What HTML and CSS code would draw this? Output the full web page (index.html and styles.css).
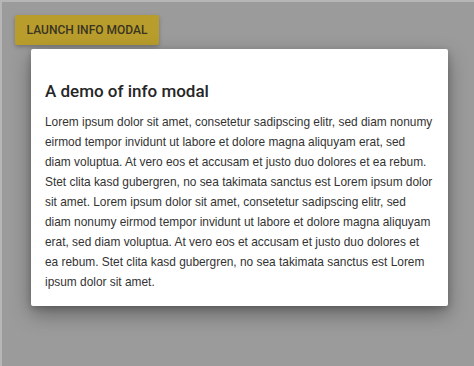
FILE: index.html
```html
<!DOCTYPE html>
<html>
<head>
<meta charset="utf-8">
<link rel="stylesheet" href="styles.css">
</head>
<body>
<div class="page">
  <button class="launch">LAUNCH INFO MODAL</button>
  <div class="modal">
    <h2 class="title">A demo of info modal</h2>
    <p class="text">Lorem ipsum dolor sit amet, consetetur sadipscing elitr, sed diam nonumy eirmod tempor invidunt ut labore et dolore magna aliquyam erat, sed diam voluptua. At vero eos et accusam et justo duo dolores et ea rebum. Stet clita kasd gubergren, no sea takimata sanctus est Lorem ipsum dolor sit amet. Lorem ipsum dolor sit amet, consetetur sadipscing elitr, sed diam nonumy eirmod tempor invidunt ut labore et dolore magna aliquyam erat, sed diam voluptua. At vero eos et accusam et justo duo dolores et ea rebum. Stet clita kasd gubergren, no sea takimata sanctus est Lorem ipsum dolor sit amet.</p>
  </div>
</div>
</body>
</html>
```
FILE: styles.css
```css
html, body {
  margin: 0;
  height: 100%;
  background: #b6b6b6;
}
body {
  padding: 2px 0 0 2px;
  box-sizing: border-box;
}
.page {
  height: 100%;
  background: #9b9b9b;
  padding: 13px 0 0 13px;
  box-sizing: border-box;
}
.launch {
  display: block;
  height: 30px;
  width: 144px;
  padding: 0;
  border: none;
  border-radius: 2px;
  background: #b89d2c;
  color: #3a3422;
  font-family: Roboto, sans-serif;
  font-weight: 500;
  font-size: 12px;
  letter-spacing: 0;
  box-shadow: 0 2px 4px rgba(0,0,0,0.25);
}
.modal {
  margin: 4px 0 0 16px;
  width: 417px;
  box-sizing: border-box;
  background: #ffffff;
  border-radius: 2px;
  padding: 30px 15px 14px 14px;
  box-shadow: 0 8px 20px rgba(0,0,0,0.35), 0 2px 6px rgba(0,0,0,0.2);
}
.title {
  margin: 0 0 9px;
  font-family: Roboto, sans-serif;
  font-weight: 500;
  font-size: 17px;
  line-height: 24px;
  color: #262626;
}
.text {
  margin: 0;
  font-family: "Liberation Sans", Arial, sans-serif;
  font-size: 11.9px;
  line-height: 20px;
  color: #333333;
}
```
